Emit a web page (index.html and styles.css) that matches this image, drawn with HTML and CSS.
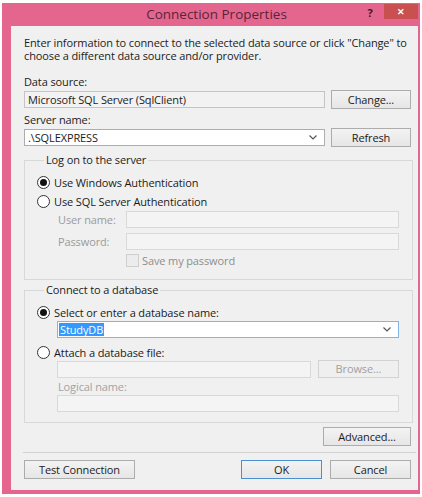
FILE: index.html
```html
<!DOCTYPE html>
<html lang="en">
<head>
    <meta charset="UTF-8">
    <title>Connection Properties</title>
    <link rel="stylesheet" href="styles.css">
</head>
<body>
<div class="window">
    <div class="titlebar">
        <div class="title">Connection Properties</div>
        <div class="help">?</div>
        <div class="close">&#x2715;</div>
    </div>

    <div class="content">
        <p class="desc">Enter information to connect to the selected data source or click "Change" to choose a different data source and/or provider.</p>

        <div class="label label-first">Data source:</div>
        <div class="row">
            <div class="field readonly">Microsoft SQL Server (SqlClient)</div>
            <div class="btn btn-side">Change...</div>
        </div>

        <div class="label">Server name:</div>
        <div class="row">
            <div class="field combo">
                <span>.\SQLEXPRESS</span>
                <svg class="arrow" width="8" height="5" viewBox="0 0 8 5"><path d="M0.5 0.5 L4 4 L7.5 0.5" fill="none" stroke="#555" stroke-width="1.2"/></svg>
            </div>
            <div class="btn btn-side">Refresh</div>
        </div>

        <!-- Log on section -->
        <fieldset class="group group-logon">
            <legend>Log on to the server</legend>
            <div class="radio-row first">
                <span class="radio on"></span>Use Windows Authentication
            </div>
            <div class="radio-row">
                <span class="radio"></span>Use SQL Server Authentication
            </div>
            <div class="cred-row user">
                <span class="cred-label">User name:</span>
                <div class="field disabled"></div>
            </div>
            <div class="cred-row pass">
                <span class="cred-label">Password:</span>
                <div class="field disabled"></div>
            </div>
            <div class="save-row">
                <span class="checkbox"></span>Save my password
            </div>
        </fieldset>

        <!-- Database section -->
        <fieldset class="group group-db">
            <legend>Connect to a database</legend>
            <div class="radio-row first">
                <span class="radio on"></span>Select or enter a database name:
            </div>
            <div class="field combo focus db-combo">
                <span class="selected">StudyDB</span>
                <svg class="arrow" width="8" height="5" viewBox="0 0 8 5"><path d="M0.5 0.5 L4 4 L7.5 0.5" fill="none" stroke="#555" stroke-width="1.2"/></svg>
            </div>
            <div class="radio-row attach">
                <span class="radio"></span>Attach a database file:
            </div>
            <div class="file-row">
                <div class="field disabled"></div>
                <div class="btn disabled-btn">Browse...</div>
            </div>
            <div class="logical-label">Logical name:</div>
            <div class="field disabled logical"></div>
        </fieldset>

        <div class="advanced-row">
            <div class="btn btn-advanced">Advanced...</div>
        </div>

        <div class="separator"></div>

        <div class="footer">
            <div class="btn btn-test">Test Connection</div>
            <div class="spacer"></div>
            <div class="btn btn-ok">OK</div>
            <div class="btn btn-cancel">Cancel</div>
        </div>
    </div>
</div>
</body>
</html>
```

FILE: styles.css
```css
body {
    margin: 0;
    background: #fff;
    font-family: "Open Sans", "Noto Sans", sans-serif;
    font-size: 11px;
    letter-spacing: -0.12px;
    color: #1b1b1b;
}

.window {
    margin: 3px 2px 0 2px;
    padding: 0 2px 4px 9px;
    background: #e4668f;
}

/* title bar */
.titlebar {
    display: flex;
    align-items: flex-start;
    height: 23px;
}
.title {
    flex: 1;
    padding-left: 66px;
    text-align: center;
    font-size: 13.5px;
    letter-spacing: 0;
    line-height: 23px;
    color: #5a2438;
}
.help {
    width: 28px;
    text-align: center;
    font-size: 11px;
    font-weight: 700;
    line-height: 19px;
    color: #3a1a26;
}
.close {
    width: 34px;
    height: 15px;
    margin-top: 1px;
    background: #c9504f;
    color: #fff;
    font-size: 9px;
    font-weight: 700;
    line-height: 15px;
    text-align: center;
}

/* dialog body */
.content {
    background: #f0f0f0;
    padding: 10px 7px 11px 13px;
}
.desc {
    margin: 0;
    line-height: 13px;
}

.label {
    line-height: 14px;
    margin-top: 4px;
}
.label-first {
    margin-top: 13px;
}

.row {
    display: flex;
    align-items: center;
    gap: 6px;
    margin-top: 1px;
    height: 19px;
}
.row .field {
    flex: 1;
}

.field {
    box-sizing: border-box;
    height: 17px;
    border: 1px solid #adadad;
    background: #fff;
    padding: 0 3px;
    line-height: 15px;
    white-space: nowrap;
}
.field.readonly {
    background: #f2f2f2;
    border-color: #c4c4c4;
}
.field.disabled {
    background: #f4f4f4;
    border-color: #d9d9d9;
}
.combo {
    display: flex;
    align-items: center;
    justify-content: space-between;
    padding-right: 7px;
}
.combo.focus {
    border-color: #82b5e6;
}
.selected {
    background: #3399ff;
    color: #fff;
    padding: 0 1px;
    margin-left: -2px;
    line-height: 13px;
}

.btn {
    box-sizing: border-box;
    height: 19px;
    border: 1px solid #acacac;
    background: linear-gradient(#f3f3f3, #e6e6e6);
    text-align: center;
    line-height: 17px;
}
.btn-side {
    width: 80px;
}

/* groups */
.group {
    margin: 6px -2px 0 0;
    padding: 0 13px 0 12px;
    border: 1px solid #d8d8d8;
    min-width: 0;
}
.group legend {
    margin-left: 7px;
    padding: 0 2px;
    line-height: 14px;
}
.group-logon {
    padding-bottom: 12px;
}
.group-db {
    margin-top: 3px;
    padding-bottom: 10px;
}

.radio-row {
    display: flex;
    align-items: center;
    gap: 4px;
    height: 16px;
    margin-top: 3px;
}
.radio-row.first {
    margin-top: 7px;
}
.radio {
    box-sizing: border-box;
    width: 13px;
    height: 13px;
    border: 1px solid #333;
    border-radius: 50%;
    background: #fff;
    display: flex;
    align-items: center;
    justify-content: center;
}
.radio.on::after {
    content: "";
    width: 7px;
    height: 7px;
    border-radius: 50%;
    background: #111;
}

.cred-row {
    display: flex;
    align-items: center;
    margin-left: 21px;
    margin-top: 2px;
}
.cred-row.pass {
    margin-top: 5px;
}
.cred-label {
    width: 68px;
    color: #9a9a9a;
}
.cred-row .field {
    flex: 1;
}

.save-row {
    display: flex;
    align-items: center;
    gap: 3px;
    margin: 3px 0 0 89px;
    height: 14px;
    color: #8e8e8e;
}
.checkbox {
    box-sizing: border-box;
    width: 13px;
    height: 13px;
    border: 1px solid #cfcfcf;
    background: #ececec;
}

.db-combo {
    margin: 1px 0 0 20px;
}
.radio-row.attach {
    margin-top: 7px;
    height: 14px;
}
.file-row {
    display: flex;
    gap: 7px;
    margin: 1px 0 0 20px;
    align-items: center;
    height: 18px;
}
.file-row .field {
    flex: 1;
}
.disabled-btn {
    width: 81px;
    height: 18px;
    color: #a0a0a0;
    border-color: #d2d2d2;
    background: #efefef;
    line-height: 16px;
}
.logical-label {
    margin: 2px 0 0 21px;
    line-height: 14px;
    color: #a3a3a3;
}
.logical {
    margin: 1px 0 0 20px;
}

.advanced-row {
    display: flex;
    justify-content: flex-end;
    margin-top: 4px;
}
.btn-advanced {
    width: 88px;
}

.separator {
    margin: 6px -5px 0 -1px;
    border-top: 1px solid #d2d2d2;
}

.footer {
    display: flex;
    gap: 8px;
    margin-top: 7px;
}
.spacer {
    flex: 1;
}
.btn-test {
    width: 111px;
}
.btn-ok {
    width: 81px;
    border-color: #4b8fd0;
}
.btn-cancel {
    width: 81px;
}
```
